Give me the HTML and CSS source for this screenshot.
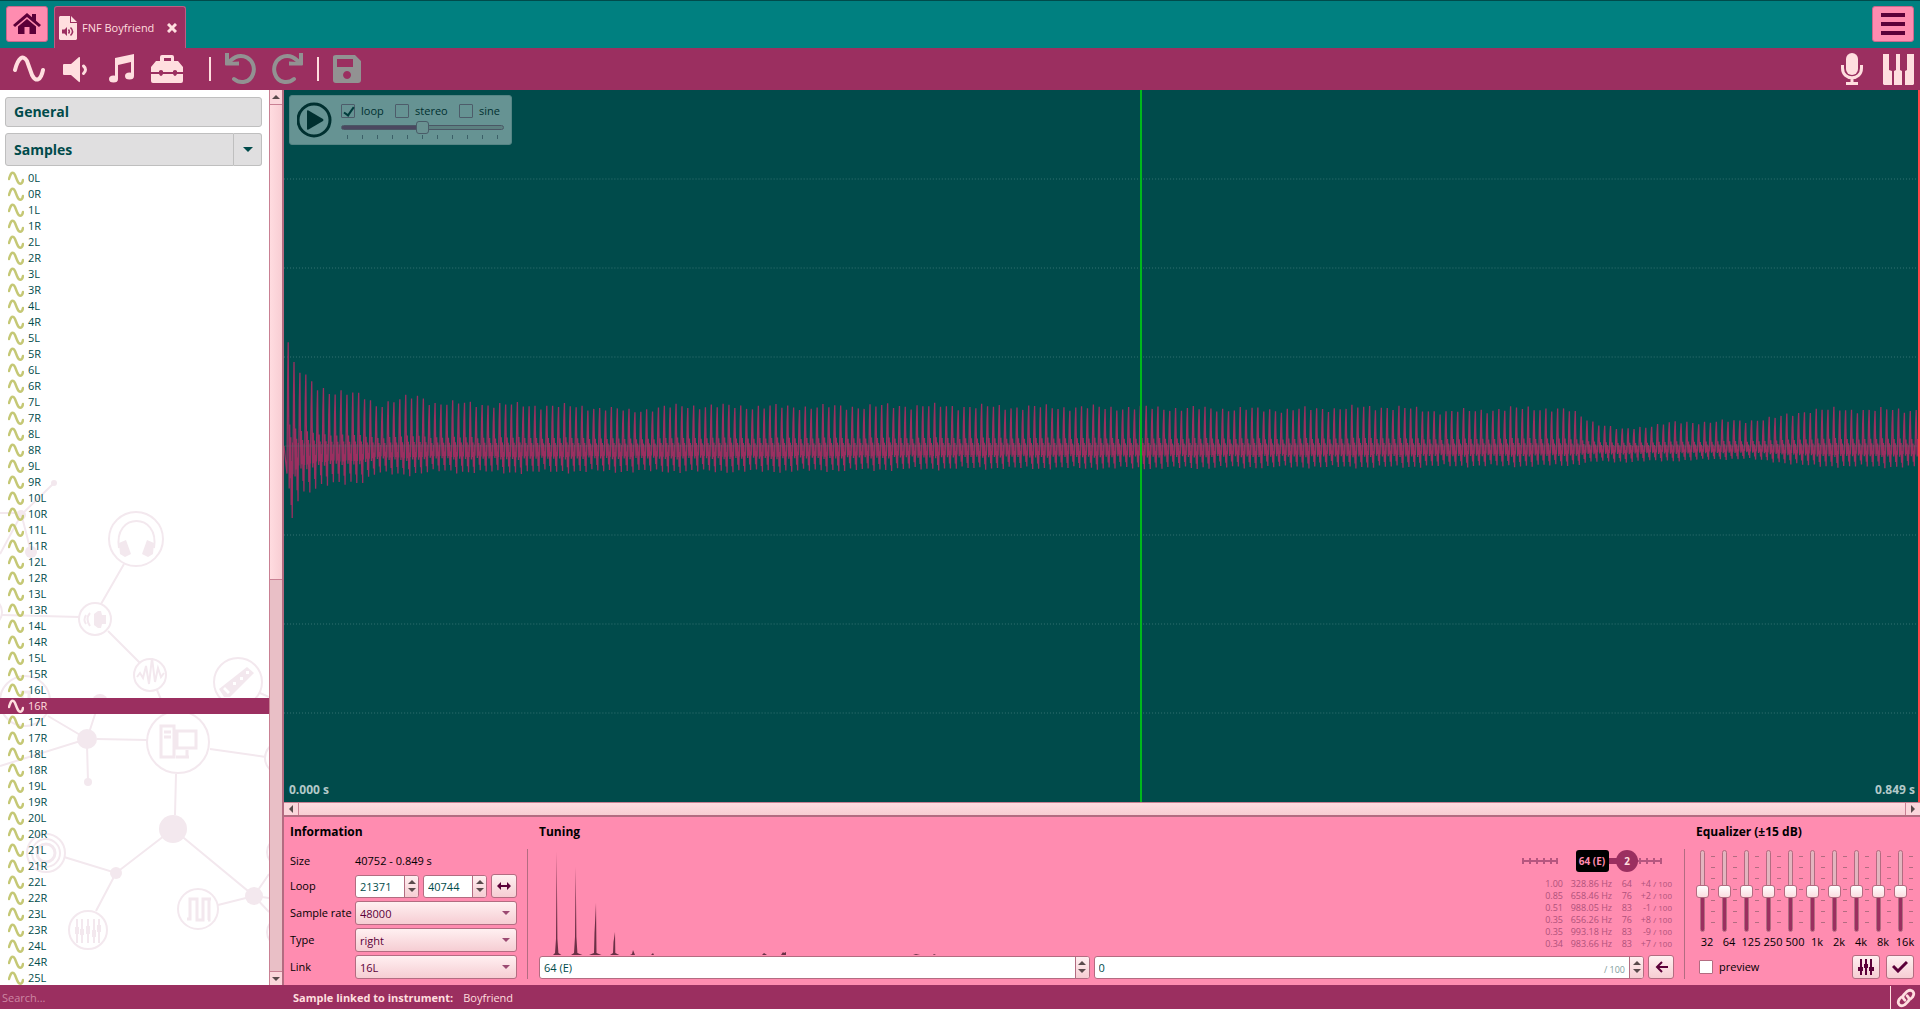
FILE: index.html
```
<!DOCTYPE html>
<html lang="en">
<head>
    <meta charset="UTF-8">
    <meta name="viewport" content="width=device-width, initial-scale=1.0">
    <title>FNF Boyfriend</title>
    <link rel="stylesheet" href="styles.css">
</head>
<body>

    <!-- Tabs -->
    <header class="tabs">
        <button class="square-btn" title="Home">
            <svg width="28" height="24" viewBox="0 0 28 24"><path d="M14 1L0 13l2 2L14 5l12 10 2-2-5-4.300V2h-4v3.300z"/><path d="M14 7L5 14.500V22h6.500v-7h5v7H23v-7.500z"/></svg>
        </button>
        <div class="tab">
            <svg width="18" height="24" viewBox="0 0 18 24"><path fill="#ffdedf" d="M1 0h10v7h7v16l-1 1H1l-1-1V1zM12 0l6 6h-6z"/><path fill="#9b2f60" d="M3 13.500h2.500L8 11v9l-2.500-2.500H3z"/><path fill="none" stroke="#9b2f60" stroke-width="1.500" d="M9.500 13.500q1.700 2 0 4M11.500 11.500q4 4 0 8"/></svg>
            <span>FNF Boyfriend</span>
            <button class="tab-close" title="Close">
                <svg width="10" height="10" viewBox="0 0 10 10"><path stroke="#ffdedf" stroke-width="3" d="M1 1l8 8M9 1l-8 8"/></svg>
            </button>
        </div>
        <button class="square-btn menu-btn" title="Menu">
            <svg width="24" height="22" viewBox="0 0 24 22"><path d="M0 0h24v4H0zM0 9h24v4H0zM0 18h24v4H0z"/></svg>
        </button>
    </header>

    <!-- Toolbar -->
    <nav class="toolbar">
        <button title="Add sample"><svg viewBox="0 0 32 32"><path fill="none" stroke="#ffdedf" stroke-width="4" stroke-linecap="round" d="M2 17C5 5 10 1 14 8l5 14c4 8 9 5 11-5"/></svg></button>
        <button title="Add instrument"><svg viewBox="0 0 32 32"><path fill="#ffdedf" d="M5 11h7l8-7q1-.5 1 1v23q0 1.500-1 1l-8-7H5q-1 0-1-1v-9q0-1 1-1z"/><path fill="none" stroke="#ffdedf" stroke-width="3" stroke-linecap="round" d="M24.500 13q4 3.500 0 7.500"/></svg></button>
        <button title="Add preset"><svg viewBox="0 0 32 32"><path fill="#ffdedf" d="M10 5L29 1v22h-3V9L13 12v14h-3z"/><ellipse cx="8.500" cy="26" rx="4.500" ry="3.500" fill="#ffdedf"/><ellipse cx="24.500" cy="23" rx="4.500" ry="3.500" fill="#ffdedf"/></svg></button>
        <button title="Toolbox"><svg viewBox="0 0 32 32"><path fill="#ffdedf" fill-rule="evenodd" d="M9 8V4q0-2 2-2h10q2 0 2 2v4h4l5 6v5h-6v-1q-2-2-4 0v1H12v-1q-2-2-4 0v1H0v-5l5-6zM13 5v3h7V5zM0 21h8q2 4 4 0h10q2 4 4 0h6v7q0 2-2 2H2q-2 0-2-2z"/></svg></button>
        <span class="toolbar-line first"></span>
        <button title="Undo" disabled><svg viewBox="0 0 32 32"><path fill="none" stroke="#929292" stroke-width="4" stroke-linecap="round" d="M4 9.500C15-5 33 7 28 21c-3 9-13 10-19 5"/><path fill="#929292" d="M0 0h4v9l10-.5v4H1q-1 0-1-1z"/></svg></button>
        <button title="Redo" disabled><svg viewBox="0 0 32 32"><path fill="none" stroke="#929292" stroke-width="4" stroke-linecap="round" d="M28 9.500C17-5-1 7 4 21c3 9 13 10 19 5"/><path fill="#929292" d="M32 0h-4v9l-10-.5v4h13q1 0 1-1z"/></svg></button>
        <span class="toolbar-line"></span>
        <button title="Save" disabled><svg viewBox="0 0 32 32"><path fill="#929292" fill-rule="evenodd" d="M3 2h19l6 6v19q0 3-3 3H3q-3 0-3-3V4q0-2 3-2zM4 6v8h16V6zM14 18a4 4 0 1 0 .1 0z"/></svg></button>
        <div class="toolbar-right">
            <button title="Recorder"><svg viewBox="0 0 32 32"><rect x="10" y="0" width="12" height="22" rx="6" fill="#ffdedf"/><path fill="none" stroke="#ffdedf" stroke-width="3" d="M6.500 12v3c0 13 19 13 19 0v-3M16 24v6M10 30.500h12"/></svg></button>
            <button title="Keyboard"><svg viewBox="0 0 32 32"><path fill="#ffdedf" d="M1 1h6v16l3 1v14H2l-1-1zM14 1h4v16l2 1v14h-8V18l2-1zM25 1h7v30l-1 1h-8V18l2-1z"/></svg></button>
        </div>
    </nav>

    <main class="workspace">
        <!-- Sample tree -->
        <aside class="sidebar">
            <div class="tree">
                <svg class="network" width="269" height="505" viewBox="0 480 269 505">
                    <g fill="none" stroke="#f3e8ee" stroke-width="2">
                        <path d="M54 483L21 515 0 554M0 513h21l10 39M124 564l-23 40M2 615l78 2M108 631l32 32M157 690l5 12M260 693l9 4M48 716l39 23M99 702L87 739 0 766M97 739l50 1M87 745l1 36M210 749l56 8M176 774l-1 41M173 829l-57 44-52-16M116 873l-20 38M173 829l81 67-36 9M269 874l-15 22 15 2M254 896l15 16"/>
                        <circle cx="136" cy="539" r="27"/><circle cx="-12" cy="612" r="14"/><circle cx="95" cy="619" r="16"/><circle cx="150" cy="675" r="16"/>
                        <circle cx="238" cy="682" r="24"/><circle cx="25" cy="701" r="25"/><circle cx="178" cy="742" r="31"/><circle cx="281" cy="758" r="16"/>
                        <circle cx="46" cy="853" r="19"/><circle cx="46" cy="853" r="14"/><circle cx="46" cy="853" r="9" stroke-width="3"/><circle cx="88" cy="930" r="19"/><circle cx="198" cy="909" r="20"/>
                        <circle cx="281" cy="852" r="14"/><circle cx="281" cy="932" r="14"/>
                        <path d="M119 548c-6-36 41-36 35 0M90 613q-5 6 0 13M86 615q-3 5 0 9"/>
                        <path stroke-width="3" d="M187 919h3v-20h7v21h6v-21h6v21h-1M209 899h2"/>
                        <path d="M137 677l3-4 3 5 3-12 3 18 3-26 3 24 3-14 3 9 3-4"/>
                        <path stroke-width="3" d="M161 726h13v31h-13zM177 731h19v17h-19zM176 757h13M187 750v6M164 732h7M164 737h7"/>
                        <path d="M77 919v24M82 919v24M88 919v24M94 919v24M99 919v24"/>
                        <path stroke-width="4" d="M77 927v7M82 929v6M88 926v8M94 930v7M99 925v7"/>
                        <path stroke-width="3" d="M22 712v-20h7v20"/>
                    </g>
                    <g fill="#f3e8ee">
                        <circle cx="54" cy="483" r="3"/><circle cx="21" cy="515" r="5"/><circle cx="31" cy="552" r="6"/><circle cx="100" cy="702" r="8"/><circle cx="87" cy="739" r="10"/>
                        <circle cx="88" cy="782" r="4"/><circle cx="173" cy="829" r="14"/><circle cx="116" cy="873" r="6"/><circle cx="254" cy="896" r="9"/>
                        <path d="M119 543l7-3 5 14-6 3-5-3zM154 543l-7-3-5 14 6 3 5-3zM94 614l4-3h3l1 4h4v9h-4l-1 4h-3l-4-3z"/>
                        <path fill-rule="evenodd" d="M219 689l28-22 7 6-24 24h-6zM223 689l5 5 2-2-5-5zM233 682v3h3v-3zM240 677v3h3v-3zM246 671v3h3v-3z"/>
                    </g>
                </svg>
                <button class="tree-title">General</button>
                <div class="tree-split">
                    <button class="tree-title">Samples</button>
                    <button class="tree-arrow" title="Fold"></button>
                </div>
                <ul class="samples" id="samples"></ul>
            </div>
            <div class="scroll-v">
                <button class="arrow up" title="Up"></button>
                <div class="thumb"></div>
                <div class="track"></div>
                <button class="arrow down" title="Down"></button>
            </div>
        </aside>

        <section class="editor">
            <!-- Waveform -->
            <div class="wave">
                <svg class="wave-plot" id="wavePlot" viewBox="0 0 1634 712" preserveAspectRatio="none">
                    <path id="waveGrid" class="wave-grid"/>
                    <path id="waveLine" class="wave-line" stroke-width="1.3"/>
                    <path class="wave-zero" d="M0 356H1634"/>
                </svg>
                <div class="loop-start"></div>
                <div class="loop-end"></div>
                <span class="time">0.000 s</span>
                <span class="time end">0.849 s</span>

                <div class="player">
                    <button class="play" title="Play">
                        <svg width="36" height="36" viewBox="0 0 36 36"><circle cx="17" cy="18" r="16" fill="none" stroke="#003030" stroke-width="3"/><path d="M10 9q0-1 1.500-.5L26 17q1 1 0 2l-14.500 8.500Q10 28 10 27z" fill="#003030"/></svg>
                    </button>
                    <div class="player-options">
                        <div class="checks">
                            <label><input type="checkbox" checked>loop</label>
                            <label><input type="checkbox">stereo</label>
                            <label><input type="checkbox">sine</label>
                        </div>
                        <input class="gain" type="range" min="0" max="10" value="5" aria-label="Gain">
                        <div class="gain-ticks"></div>
                    </div>
                </div>
            </div>

            <div class="scroll-h">
                <button class="arrow left" title="Left"></button>
                <div class="thumb"></div>
                <button class="arrow right" title="Right"></button>
            </div>

            <div class="panel">
                <!-- Information -->
                <section class="info">
                    <h2>Information</h2>
                    <div class="info-grid">
                        <span>Size</span>
                        <span>40752 - 0.849 s</span>
                        <label for="loopStart">Loop</label>
                        <div class="loop">
                            <div class="spin"><input id="loopStart" value="21371"><span class="steps"><button title="More"></button><button title="Less"></button></span></div>
                            <div class="spin"><input value="40744" aria-label="Loop end"><span class="steps"><button title="More"></button><button title="Less"></button></span></div>
                            <button class="btn small" title="Whole sample"><svg width="14" height="8" viewBox="0 0 14 8"><path d="M0 4l4-4v3h6V0l4 4-4 4V5H4v3z"/></svg></button>
                        </div>
                        <label for="rate">Sample rate</label>
                        <div class="select"><select id="rate"><option>48000</option></select></div>
                        <label for="type">Type</label>
                        <div class="select"><select id="type"><option>right</option></select></div>
                        <label for="link">Link</label>
                        <div class="select"><select id="link"><option>16L</option></select></div>
                    </div>
                </section>

                <!-- Tuning -->
                <section class="tuning">
                    <h2>Tuning</h2>
                    <div class="tuning-body">
                        <svg class="spectrum" width="600" height="105" viewBox="0 0 600 105"><path d="M14 105l2-2 1-14 .7-87 .7 87 1 14 3 2zM32 105l3-2 1-16 .7-70 .7 70 1 16 5 2zM50 105l5-2 .5-20 1.500-30 .5 50 5 2zM71 105l3-2 .5-11 1.500-10 .3 21 4 2zM91 105l2-1 1-4 2 5zM112 105l2-2 1 2zM223 105l2-2 3 2zM242 105l2-3 1 1 2-1 0 3zM374 105l3-1 4 1zM394 105l1-1 2 1z"/></svg>
                        <div class="detect">
                            <svg width="140" height="24" viewBox="0 0 140 24">
                                <path stroke="#b5567f" stroke-width="2" d="M0 11h36M1 8v6M8 8v6M15 8v6M22 8v6M29 8v6M35 8v6M112 11h28M118 8v6M125 8v6M132 8v6M139 8v6"/>
                                <path stroke="#9b2f60" stroke-width="6" d="M84 11h12"/>
                                <rect x="54" y="0" width="33" height="22" rx="3"/>
                                <circle cx="105" cy="11" r="11" fill="#9b2f60"/>
                                <text x="70" y="15" fill="#ff8cb0">64 (E)</text>
                                <text x="105" y="15" fill="#ffdedf">2</text>
                            </svg>
                            <table>
                                <tr><td>1.00</td><td>328.86 Hz</td><td>64</td><td>+4 <small>/ 100</small></td></tr>
                                <tr><td>0.85</td><td>658.46 Hz</td><td>76</td><td>+2 <small>/ 100</small></td></tr>
                                <tr><td>0.51</td><td>988.05 Hz</td><td>83</td><td>-1 <small>/ 100</small></td></tr>
                                <tr><td>0.35</td><td>656.26 Hz</td><td>76</td><td>+8 <small>/ 100</small></td></tr>
                                <tr><td>0.35</td><td>993.18 Hz</td><td>83</td><td>-9 <small>/ 100</small></td></tr>
                                <tr><td>0.34</td><td>983.66 Hz</td><td>83</td><td>+7 <small>/ 100</small></td></tr>
                            </table>
                        </div>
                    </div>
                    <div class="tuning-fields">
                        <div class="spin"><input value="64 (E)" aria-label="Root key"><span class="steps"><button title="More"></button><button title="Less"></button></span></div>
                        <div class="spin"><input value="0" aria-label="Correction"><span class="unit">/ 100</span><span class="steps"><button title="More"></button><button title="Less"></button></span></div>
                        <button class="btn small" title="Apply tuning"><svg width="13" height="12" viewBox="0 0 13 12"><path fill="none" stroke="#5c0039" stroke-width="2" d="M13 6H2M7 1L2 6l5 5"/></svg></button>
                    </div>
                </section>

                <!-- Equalizer -->
                <section class="equalizer">
                    <h2>Equalizer (±15 dB)</h2>
                    <div class="bands">
                        <label class="band"><input type="range" min="-15" max="15" value="0"><span>32</span></label>
                        <label class="band"><input type="range" min="-15" max="15" value="0"><span>64</span></label>
                        <label class="band"><input type="range" min="-15" max="15" value="0"><span>125</span></label>
                        <label class="band"><input type="range" min="-15" max="15" value="0"><span>250</span></label>
                        <label class="band"><input type="range" min="-15" max="15" value="0"><span>500</span></label>
                        <label class="band"><input type="range" min="-15" max="15" value="0"><span>1k</span></label>
                        <label class="band"><input type="range" min="-15" max="15" value="0"><span>2k</span></label>
                        <label class="band"><input type="range" min="-15" max="15" value="0"><span>4k</span></label>
                        <label class="band"><input type="range" min="-15" max="15" value="0"><span>8k</span></label>
                        <label class="band"><input type="range" min="-15" max="15" value="0"><span>16k</span></label>
                    </div>
                    <div class="eq-actions">
                        <label><input type="checkbox">preview</label>
                        <button class="btn" title="Reset"><svg width="16" height="16" viewBox="0 0 16 16"><path d="M2 0h2v16H2zM7 0h2v16H7zM12 0h2v16h-2zM0 8h5v4H0zM6 5h4v4H6zM11 8h5v4h-5z"/></svg></button>
                        <button class="btn" title="Apply"><svg width="16" height="12" viewBox="0 0 16 12"><path fill="none" stroke="#5c0039" stroke-width="3" d="M1 5l5 5 9-9"/></svg></button>
                    </div>
                </section>
            </div>
        </section>
    </main>

    <!-- Status bar -->
    <footer class="status">
        <input class="search" type="text" placeholder="Search..." aria-label="Search">
        <b>Sample linked to instrument:</b>
        <span>Boyfriend</span>
        <button class="link-btn" title="Link"><svg width="20" height="20" viewBox="0 0 18 18"><g fill="none" stroke="#ffdedf" stroke-width="2.500" stroke-linecap="round"><path d="M8 11Q5 8 7 6l3-3q3-2 5 0t0 5l-2 2"/><path d="M10 7q3 3 1 5l-3 3q-3 2-5 0t0-5l2-2"/></g></svg></button>
    </footer>

    <script src="script.js"></script>
</body>
</html>
```
FILE: styles.css
```
/* --- Base --- */
* { box-sizing: border-box; }
body {
    margin: 0;
    height: 100vh;
    display: flex; flex-direction: column;
    overflow: hidden;
    background: #fff;
    font-family: "Open Sans", "Noto Sans", sans-serif;
    font-size: 11px; line-height: 16px;
    color: #004b4b;
}
button, input, select { font: inherit; color: inherit; margin: 0; }
button {
    display: flex; justify-content: center; align-items: center;
    padding: 0; border: none; background: none;
    flex: none;
}
svg { display: block; }
h2 { margin: 0; font-size: 12px; line-height: 16px; font-weight: bold; }

/* --- Tabs --- */
.tabs {
    display: flex; gap: 6px;
    height: 48px; flex: none;
    padding: 5px 6px 0;
    border-top: 1px solid #004b4b;
    background: #008080;
}
.square-btn {
    width: 42px; height: 36px;
    border: 1px solid #cd668c; border-radius: 3px;
    background: #ff8cb0; fill: #5c0039;
}
.menu-btn { margin-left: auto; }
.tab {
    display: flex; align-items: center; gap: 5px;
    width: 132px;
    padding: 0 4px;
    border: 1px solid #c05c82; border-bottom: none;
    border-radius: 3px 3px 0 0;
    background: #9b2f60; color: #ffdedf;
}
.tab span { white-space: nowrap; }
.tab-close { margin-left: 8px; }

/* --- Toolbar --- */
.toolbar {
    display: flex; align-items: center; gap: 14px;
    height: 42px; flex: none;
    padding: 0 6px 0 13px;
    background: #9b2f60;
}
.toolbar svg { width: 32px; height: 32px; }
.toolbar-line { width: 2px; height: 24px; background: #ffdedf; }
.toolbar-line.first { margin-left: 12px; }
.toolbar-right { display: flex; gap: 14px; margin-left: auto; }

/* --- Sidebar --- */
.workspace { display: flex; flex: 1; min-height: 0; }
.sidebar { display: flex; width: 284px; flex: none; }
.tree { position: relative; flex: 1; overflow: hidden; padding-top: 7px; }
.network { position: absolute; left: 0; bottom: 0; z-index: -1; }
.tree-title {
    justify-content: flex-start;
    width: 257px; height: 30px;
    margin-left: 5px; padding-left: 8px;
    border: 1px solid #bfbfbf; border-radius: 3px;
    background: #e0dfe0;
    font-size: 14px; font-weight: bold;
}
.tree-split { display: flex; margin: 6px 0 4px; }
.tree-split .tree-title {
    width: 229px; height: 33px;
    border-radius: 3px 0 0 3px;
}
.tree-arrow {
    width: 28px; height: 33px;
    border: 1px solid #bfbfbf; border-left: none;
    border-radius: 0 3px 3px 0;
    background: #e0dfe0;
}
.tree-arrow::after {
    content: "";
    border: 5px solid transparent; border-top-color: #004b4b; border-bottom: none;
}
.samples { list-style: none; margin: 0; padding: 0; }
.samples li {
    display: flex; align-items: center; gap: 4px;
    height: 16px; padding: 0 0 0 8px;
}
.samples svg { fill: none; stroke: #c5c875; stroke-linecap: round; }
.samples .selected { background: #9b2f60; color: #ffdedf; }
.samples .selected svg { stroke: #ffdedf; }

/* --- Scroll bars --- */
.scroll-v {
    display: flex; flex-direction: column;
    width: 15px; flex: none;
    border-left: 1px solid #c98093; border-right: 2px solid #b36c81;
    background: #e9bfc6;
}
.scroll-v .thumb {
    flex: 474;
    border: 1px solid #c98093; border-width: 1px 0;
    background: linear-gradient(to right, #ffdce0, #f8cdd3);
}
.scroll-v .track { flex: 391; }
.scroll-h {
    display: flex;
    height: 15px; flex: none;
    border-top: 1px solid #c98093; border-bottom: 2px solid #b36c81;
}
.scroll-h .thumb {
    flex: 1;
    border: 1px solid #c98093; border-width: 0 1px;
    background: linear-gradient(#ffdce0, #f8cdd3);
}
.arrow { width: 14px; height: 14px; background: #fbd6db; }
.scroll-v .arrow { width: 100%; }
.scroll-h .arrow { height: 100%; }
.scroll-v .down { border-top: 1px solid #c98093; }
.arrow::after { content: ""; border: 4px solid transparent; }
.arrow.up::after { border-top: none; border-bottom-color: #5a4a4c; }
.arrow.down::after { border-bottom: none; border-top-color: #5a4a4c; }
.arrow.left::after { border-left: none; border-right-color: #5a4a4c; }
.arrow.right::after { border-right: none; border-left-color: #5a4a4c; }

/* --- Waveform --- */
.editor { display: flex; flex-direction: column; flex: 1; min-width: 0; }
.wave {
    position: relative;
    flex: 1; min-height: 0;
    padding: 5px;
    background: #004b4b;
}
.wave-plot { position: absolute; left: 0; top: 0; width: 100%; height: 100%; }
.wave-grid { fill: none; stroke: #1a5f5f; stroke-width: 2; stroke-dasharray: 1 2; }
.wave-line { fill: none; stroke: #9b2f60; stroke-linejoin: bevel; }
.wave-zero { stroke: rgba(90, 110, 110, 0.2); stroke-width: 2; }
.loop-start, .loop-end { position: absolute; top: 0; bottom: 0; width: 2px; }
.loop-start { left: 52.35%; background: #00b81c; }
.loop-end { right: 0; background: #ff4545; }
.time {
    position: absolute; left: 5px; bottom: 4px;
    font-size: 12px; font-weight: bold; color: #b3c9c9;
}
.time.end { left: auto; right: 5px; }

/* --- Player --- */
.player {
    position: relative;
    display: flex; gap: 8px;
    width: 223px; height: 50px;
    padding: 7px;
    border: 1px solid #558585; border-radius: 3px;
    background: #669393;
    color: #003030;
}
.player-options { flex: 1; }
.checks { display: flex; justify-content: space-between; padding-right: 4px; }
.checks label, .eq-actions label { display: flex; align-items: center; gap: 6px; }
input[type="checkbox"] {
    appearance: none;
    width: 14px; height: 14px;
    border: 1px solid #b36c81; border-radius: 1px;
    background: #fff;
}
.checks input[type="checkbox"] { border-color: #4d5c6a; background: none; }
.checks input:checked::after {
    content: "";
    display: block;
    width: 4px; height: 9px;
    margin-left: 4px;
    border: solid #003c3c; border-width: 0 2px 2px 0;
    transform: rotate(35deg);
}
.gain {
    appearance: none;
    display: block;
    width: 100%; height: 14px;
    margin-top: 1px;
    background: none;
}
.gain::-webkit-slider-runnable-track {
    height: 5px;
    border: 1px solid #4a5765; border-radius: 3px;
    background: linear-gradient(to right, #4b4860 50%, #5c8080 50%);
}
.gain::-webkit-slider-thumb {
    appearance: none;
    width: 13px; height: 13px;
    margin-top: -5px;
    border: 1px solid #4a5c68; border-radius: 3px;
    background: #6a9292;
}
.gain-ticks {
    height: 4px;
    margin: 1px 6px 0;
    background: repeating-linear-gradient(to right, #3c6068 0 1px, transparent 1px 15px);
}

/* --- Bottom panel --- */
.panel {
    display: flex;
    flex: none;
    padding: 7px 6px 6px;
    background: #ff8cb0;
    color: #000;
}
.panel h2 { margin-bottom: 10px; }
.info { width: 227px; flex: none; }
.info-grid {
    display: grid; grid-template-columns: 65px 162px;
    grid-template-rows: 21px 24px 24px 24px 24px;
    row-gap: 3px;
    align-items: center;
    white-space: nowrap;
}
.loop { display: flex; align-items: center; gap: 4px; }
.loop .spin { width: 64px; }
.spin {
    display: flex; align-items: center;
    height: 23px;
    border: 1px solid #b36c81; border-radius: 3px;
    background: #fff; color: #004b4b;
    overflow: hidden;
}
.spin input {
    flex: 1; min-width: 0; height: 21px;
    padding: 1px 4px 0;
    border: none; background: none;
}
.steps {
    display: flex; flex-direction: column; justify-content: center; gap: 4px;
    width: 14px; height: 21px; flex: none;
    border-left: 1px solid #b36c81;
    background: linear-gradient(#ffeef0, #f6cdd3);
}
.steps button::after {
    content: "";
    border: 4px solid transparent; border-top: none; border-bottom-color: #5a4a4c;
}
.steps button:last-child::after { transform: rotate(180deg); }
.unit { padding: 6px 4px 0 0; font-size: 9px; color: #809c9c; }
.btn {
    width: 28px; height: 24px;
    border: 1px solid #b36c81; border-radius: 3px;
    background: linear-gradient(#fff0f1, #f6cdd3);
    fill: #5c0039;
}
.btn.small { width: 26px; }
.select { position: relative; }
.select select {
    appearance: none;
    display: block;
    width: 100%; height: 24px;
    padding: 1px 4px 0;
    border: 1px solid #b36c81; border-radius: 3px;
    background: linear-gradient(#fff0f1, #f6cdd3);
    color: #5c0039;
}
.select::after {
    content: "";
    position: absolute; right: 7px; top: 10px;
    border: 4px solid transparent; border-top-color: #9b4a72; border-bottom: none;
}

/* --- Tuning --- */
.tuning {
    position: relative;
    display: flex; flex-direction: column;
    flex: 1; min-width: 0;
    padding: 0 11px 0 22px;
}
.tuning::before, .tuning::after {
    content: "";
    position: absolute; top: 25px; bottom: 0;
    width: 1px;
    background: #b36c81;
}
.tuning::before { left: 10px; }
.tuning::after { right: 0; }
.tuning-body { display: flex; justify-content: space-between; height: 105px; }
.spectrum { fill: #6b3046; }
.detect { width: 152px; }
.detect svg text { font-size: 10px; font-weight: bold; text-anchor: middle; }
.detect table {
    table-layout: fixed;
    width: 150px;
    margin-top: 4px;
    border-collapse: collapse;
    font-size: 9px; line-height: 12px;
    color: #b0527b;
    text-align: right; white-space: nowrap;
}
.detect td { padding: 0; height: 12px; }
.detect td:first-child { width: 41px; }
.detect td:nth-child(2) { width: 49px; }
.detect td:nth-child(3) { width: 20px; }
.detect td:last-child { width: 40px; }
.detect small { font-size: 8px; line-height: 8px; }
.tuning-fields { display: flex; align-items: center; gap: 4px; }
.tuning-fields .spin { flex: 1; }

/* --- Equalizer --- */
.equalizer { width: 229px; flex: none; padding-left: 11px; }
.bands { display: flex; height: 105px; white-space: nowrap; }
.band {
    position: relative;
    display: flex; flex-direction: column; align-items: center;
    width: 22px; flex: none;
}
.band input {
    appearance: none;
    writing-mode: vertical-lr; direction: rtl;
    align-self: flex-start;
    width: 13px; height: 82px;
    background: none;
}
.band input::-webkit-slider-runnable-track {
    width: 5px;
    border: 1px solid #b36c81; border-radius: 3px;
    background: linear-gradient(#e3b5bf 50%, #9b2f60 50%);
}
.band input::-webkit-slider-thumb {
    appearance: none;
    width: 13px; height: 13px;
    margin-right: -5px; margin-left: -5px;
    border: 1px solid #b36c81; border-radius: 3px;
    background: linear-gradient(#fff, #fbdde0);
}
/* dB marks to the right of the slider */
.band::after {
    content: "";
    position: absolute; left: 15px; top: 6px;
    width: 4px; height: 71px;
    background: repeating-linear-gradient(#b36c81 0 1px, transparent 1px 11px);
}
.band span { margin-top: 2px; }
.eq-actions { display: flex; align-items: center; gap: 6px; }
.eq-actions label { margin: 0 auto 0 3px; }

/* --- Status bar --- */
.status {
    display: flex; align-items: center;
    height: 24px; flex: none;
    padding-top: 1px;
    background: #9b2f60; color: #ffdedf;
}
.search {
    width: 293px; height: 22px;
    padding: 0 2px;
    border: none; background: none;
}
.search::placeholder { color: #cd86a3; }
.status span { margin-left: 10px; }
.link-btn {
    width: 30px; height: 24px;
    margin-left: auto;
    border-left: 1px solid #ffdedf;
}
```
FILE: script.js
```
// --- Sample list ---
const samples = document.getElementById('samples');
for (let i = 0; i <= 50; i++) {
    const name = Math.floor(i / 2) + (i % 2 ? 'R' : 'L');
    const item = document.createElement('li');
    if (name === '16R') item.className = 'selected';
    item.innerHTML = '<svg width="16" height="14" viewBox="0 0 16 14"><path stroke-width="2.5" d="M1 8C3 1 5 0 7 4l2 5c2 5 5 5 6 0"/></svg>' + name;
    samples.appendChild(item);
}

// --- Horizontal marks ---
let grid = '';
for (let i = 1; i < 8; i++) {
    if (i !== 4) grid += 'M0 ' + i * 89 + 'H1634';
}
document.getElementById('waveGrid').setAttribute('d', grid);

// --- Waveform ---
// [x, highest level, lowest level]
const envelope = [
    [0, 98, 40], [5, 106, 84], [10, 80, 58], [16, 75, 44], [22, 68, 42], [34, 60, 38], [46, 56, 36],
    [80, 50, 32], [92, 42, 25], [120, 48, 26], [134, 50, 25], [150, 44, 23], [220, 42, 24], [300, 40, 23],
    [345, 36, 23], [400, 41, 23], [480, 40, 23], [560, 40, 22], [620, 41, 21], [700, 40, 20],
    [857, 39, 20], [1000, 37, 19], [1100, 40, 19], [1160, 35, 18], [1250, 39, 18], [1285, 36, 17],
    [1310, 24, 14], [1335, 17, 14], [1385, 24, 13], [1460, 26, 11], [1490, 29, 14], [1525, 37, 18], [1634, 37, 19]
];
// one period: [phase, level], positive levels use the upper envelope
const period = [
    [0, -0.4], [0.1, 0.6], [0.2, 1], [0.27, 0.4], [0.32, 0.05], [0.38, -0.5], [0.46, 0.22],
    [0.54, -0.4], [0.64, 0.1], [0.72, -0.8], [0.8, -0.2], [0.88, -1.05], [0.95, 0.05]
];

function levelAt(x, side) {
    let i = 1;
    while (i < envelope.length - 1 && envelope[i][0] < x) i++;
    const a = envelope[i - 1], b = envelope[i];
    const t = (x - a[0]) / (b[0] - a[0]);
    return a[side] + (b[side] - a[side]) * t;
}

let d = 'M0 356';
for (let n = 0, start = -2; start < 1634; n++, start += 5.87) {
    const vary = 1 + 0.05 * Math.sin(n * 2.3) + 0.04 * Math.sin(n * 0.7);
    for (const [phase, level] of period) {
        const x = Math.min(1634, Math.max(0, start + phase * 5.87 + 5));
        const y = 357 - level * vary * levelAt(x, level > 0 ? 1 : 2);
        d += 'L' + x.toFixed(1) + ' ' + y.toFixed(1);
    }
}
document.getElementById('waveLine').setAttribute('d', d);
```
